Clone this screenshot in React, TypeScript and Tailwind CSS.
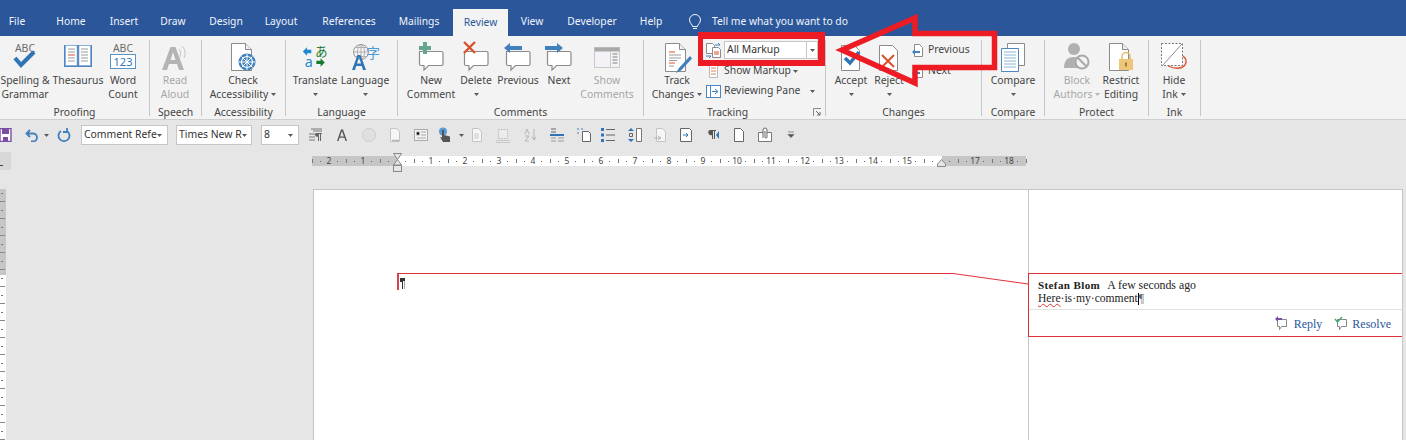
import React from "react";

const sans = "font-['Noto_Sans',sans-serif]";

function Caret({ c = "#5a5a5a" }: { c?: string }) {
  return (
    <svg width="5" height="3" viewBox="0 0 5 3" className="inline-block shrink-0">
      <path d="M0 0h5L2.500 3z" fill={c} />
    </svg>
  );
}

function Bubble({ children, muted }: { children?: React.ReactNode; muted?: boolean }) {
  return (
    <svg width="30" height="32" viewBox="0 0 30 32">
      <path d="M3.500 10.500h22a1.500 1.500 0 0 1 1.500 1.500v11a1.500 1.500 0 0 1-1.500 1.500H12.500l-4.500 4.500v-4.500H5a1.500 1.500 0 0 1-1.500-1.500z" fill="#fff" stroke={muted ? "#bbb" : "#8b8b8b"} strokeWidth="1.200" />
      {children}
    </svg>
  );
}

const icons: Record<string, React.ReactNode> = {
  spell: (
    <svg width="30" height="32" viewBox="0 0 30 32">
      <text x="15" y="11" textAnchor="middle" fontFamily="'Noto Sans',sans-serif" fontSize="10.5" fill="#6b6b6b">ABC</text>
      <path d="M5 17l6 7L24 11" fill="none" stroke="#2f74b5" strokeWidth="4.200" />
    </svg>
  ),
  thes: (
    <svg width="30" height="32" viewBox="0 2 30 32">
      <path d="M1 6h28v22H1z" fill="#4d86c0" />
      <path d="M2.500 6.500h11.500v20H2.500zM16 6.500h11.500v20H16z" fill="#fff" stroke="#7aa2cc" strokeWidth=".6" />
      <path d="M5 10h7M5 13h7M5 19h7M5 22h7" stroke="#9b9b9b" strokeWidth="1.100" />
      <path d="M5 16h7" stroke="#d9603d" strokeWidth="1.100" />
      <path d="M18 10h7M18 13h7M18 16h7M18 19h7M18 22h7" stroke="#9b9b9b" strokeWidth="1.100" />
    </svg>
  ),
  count: (
    <svg width="28" height="32" viewBox="0 0 28 32">
      <text x="14" y="11" textAnchor="middle" fontFamily="'Noto Sans',sans-serif" fontSize="10.5" fill="#6b6b6b">ABC</text>
      <rect x="1.500" y="13.500" width="25" height="14" fill="#fff" stroke="#5b93c9" />
      <text x="14" y="25" textAnchor="middle" fontFamily="'Noto Sans',sans-serif" fontSize="11" fill="#2f74b5">123</text>
    </svg>
  ),
  read: (
    <svg width="28" height="32" viewBox="0 0 28 32">
      <path d="M1 29L9.500 6h5L23 29h-5l-2-6H8l-2 6zM9.500 19h5L12 11z" fill="#b4b4b4" />
      <path d="M18 8q3 3 1 8M21 5q5 5 2 12" fill="none" stroke="#c4c4c4" />
    </svg>
  ),
  access: (
    <svg width="30" height="34" viewBox="0 0 30 34">
      <path d="M3.500 3.500h14l6 6v21h-20z" fill="#fff" stroke="#8b8b8b" />
      <path d="M17.500 3.500v6h6" fill="#eee" stroke="#8b8b8b" />
      <circle cx="19" cy="22" r="8.500" fill="#3f80bd" />
      <circle cx="19" cy="22" r="5.500" fill="none" stroke="#fff" strokeWidth="1.200" />
      <path d="M19 14v16M11 22h16M13.500 16.500l11 11M24.500 16.500l-11 11" stroke="#fff" strokeWidth="1" />
    </svg>
  ),
  translate: (
    <svg width="27" height="31" viewBox="0 -3 32 36">
      <path d="M11 7H6V4L1 9l5 5v-3h5z" fill="#1e88d2" />
      <text x="23" y="14" textAnchor="middle" fontFamily="'Noto Sans CJK JP',sans-serif" fontSize="15" fill="#197b30">あ</text>
      <text x="8" y="28" textAnchor="middle" fontFamily="'Noto Sans',sans-serif" fontSize="17" fill="#1e88d2">a</text>
      <path d="M17 20h5v-3l5 5-5 5v-3h-5z" fill="#197b30" />
    </svg>
  ),
  language: (
    <svg width="32" height="32" viewBox="0 0 32 32">
      <circle cx="12" cy="11" r="7.500" fill="none" stroke="#9b9b9b" />
      <path d="M4.500 11h15M12 3.500v15M6 6.500h12M6 15.500h12" stroke="#9b9b9b" strokeWidth=".7" />
      <ellipse cx="12" cy="11" rx="3.500" ry="7.500" fill="none" stroke="#9b9b9b" strokeWidth=".7" />
      <text x="24" y="17" textAnchor="middle" fontFamily="'Noto Sans CJK SC',sans-serif" fontSize="14" fill="#4b9bd5">字</text>
      <path d="M3 29l5.500-15h3L17 29h-3l-1.200-4H7.200L6 29zM8 22.500h4L10 16z" fill="#2f74b5" />
    </svg>
  ),
  newc: (
    <Bubble>
      <path d="M3 5h4V1h4v4h4v4h-4v4H7V9H3z" fill="#63a58f" />
    </Bubble>
  ),
  del: (
    <Bubble>
      <path d="M3 1l11 11M14 1L3 12" stroke="#d9512c" strokeWidth="2.400" />
    </Bubble>
  ),
  prev: (
    <Bubble>
      <path d="M1 7l6-5v3h12v4H7v3z" fill="#3f80bd" />
    </Bubble>
  ),
  next: (
    <Bubble>
      <path d="M19 7l-6-5v3H1v4h12v3z" fill="#3f80bd" />
    </Bubble>
  ),
  show: (
    <svg width="30" height="32" viewBox="0 0 30 32">
      <rect x="2.500" y="6.500" width="25" height="20" fill="#f5f2f7" stroke="#c9c9c9" />
      <path d="M2.500 6.500h25v4h-25z" fill="#a8a8a8" />
      <path d="M18.500 10v16" stroke="#c9c9c9" />
      <path d="M20.500 13h5M20.500 16h5M20.500 19h5M20.500 22h5" stroke="#a8a8a8" strokeWidth="1.400" />
    </svg>
  ),
  track: (
    <svg width="32" height="34" viewBox="0 0 32 34">
      <path d="M4.500 3.500h14l6 6v22h-20z" fill="#fff" stroke="#8b8b8b" />
      <path d="M18.500 3.500v6h6" fill="#eee" stroke="#8b8b8b" />
      <path d="M8 12h6M8 23h6" stroke="#d9512c" strokeWidth="1.200" />
      <path d="M8 15h12M8 18h12M8 20.500h8M8 26h5" stroke="#9b9b9b" strokeWidth="1.100" />
      <path d="M29 16l-11 12-3 5 5-2.500 11-12z" fill="#3f80bd" />
    </svg>
  ),
  accept: (
    <svg width="30" height="34" viewBox="0 0 30 34">
      <path d="M5.500 5.500h13l5 5v20h-18z" fill="#fff" stroke="#8b8b8b" />
      <path d="M9 18l5 5 9-11" fill="none" stroke="#2f74b5" strokeWidth="3.500" />
    </svg>
  ),
  reject: (
    <svg width="30" height="34" viewBox="0 0 30 34">
      <path d="M5.500 5.500h13l5 5v20h-18z" fill="#fff" stroke="#8b8b8b" />
      <path d="M8 15l12 12M20 15L8 27" stroke="#d9512c" strokeWidth="2" />
    </svg>
  ),
  compare: (
    <svg width="30" height="34" viewBox="0 0 30 34">
      <path d="M9.500 3.500h17v22h-17z" fill="#fff" stroke="#8b8b8b" />
      <path d="M3.500 8.500h17v23h-17z" fill="#fff" stroke="#4d86c0" />
      <path d="M6 12h12M6 15h12M6 18h12M6 21h12M6 24h12M6 27h12" stroke="#8cb4da" />
    </svg>
  ),
  block: (
    <svg width="32" height="34" viewBox="0 0 32 34">
      <circle cx="13" cy="9" r="6" fill="#b0b0b0" />
      <path d="M3 28q0-11 10-11t10 11z" fill="#b0b0b0" />
      <circle cx="21" cy="22" r="6.500" fill="#f3f3f3" stroke="#a8a8a8" strokeWidth="2" />
      <path d="M16.500 17.500l9 9" stroke="#a8a8a8" strokeWidth="2" />
    </svg>
  ),
  restrict: (
    <svg width="30" height="34" viewBox="0 0 30 34">
      <path d="M3.500 3.500h13l6 6v21h-19z" fill="#fff" stroke="#8b8b8b" />
      <path d="M16.500 3.500v6h6" fill="#eee" stroke="#8b8b8b" />
      <path d="M16 19v-2.500a4 4 0 0 1 8 0V19" fill="none" stroke="#e3bb6a" strokeWidth="1.500" />
      <rect x="13" y="19" width="14" height="11" fill="#edc67a" />
      <rect x="19" y="22.500" width="2" height="4" fill="#a07f3c" />
    </svg>
  ),
  ink: (
    <svg width="32" height="34" viewBox="0 0 32 34">
      <path d="M3.500 3.500h21v22h-21z" fill="#fff" stroke="#777" strokeDasharray="2 1.500" />
      <path d="M4 26L24 4" stroke="#8b8b8b" />
      <path d="M10 26q12 5 17-1 3-5-2-9" fill="none" stroke="#d9512c" strokeWidth="1.300" />
    </svg>
  ),
};

function Big({ w, icon, l1, l2, gray, caret, ml }: { w: string; icon: string; l1: string; l2?: string; gray?: boolean; caret?: "own" | "inline"; ml?: string }) {
  return (
    <div className={`${w} ${ml ?? ""} flex flex-col items-center shrink-0 ${gray ? "text-[#a6a6a6]" : "text-[#444]"}`}>
      <div className="h-[33px] w-full flex justify-center items-center">{icons[icon]}</div>
      <div className="leading-[14px] whitespace-nowrap">{l1}</div>
      {l2 && (
        <div className="leading-[14px] whitespace-nowrap flex items-center gap-[3px]">
          {l2}
          {caret === "inline" && <Caret c={gray ? "#b5b5b5" : "#5a5a5a"} />}
        </div>
      )}
      {caret === "own" && <div className="h-[14px] flex items-center"><Caret /></div>}
    </div>
  );
}

function Group({ w, label, children, labelPr }: { w: string; label: string; children: React.ReactNode; labelPr?: string }) {
  return (
    <div className={`${w} h-[76px] shrink-0 border-r border-[#c6c6c6] relative`}>
      <div className="h-[65px] flex">{children}</div>
      <div className={`leading-[14px] text-center text-[#444] ${labelPr ?? ""}`}>{label}</div>
    </div>
  );
}

function Launcher() {
  return (
    <svg width="9" height="9" viewBox="0 0 9 9" className="absolute right-[3px] bottom-[-1px]">
      <path d="M.5 8V.5H8" fill="none" stroke="#8a8a8a" />
      <path d="M3 3l4 4M7 4v3H4" fill="none" stroke="#666" />
    </svg>
  );
}

function Tab({ w, label, active, pl }: { w: string; label: string; active?: boolean; pl?: string }) {
  return (
    <div className={`${w} ${pl ?? ""} shrink-0 flex items-center justify-center whitespace-nowrap ${active ? "h-[27px] bg-[#f3f3f3] text-[#2b579a]" : "h-[28px] text-[#f0f4fa]"}`}>
      {label}
    </div>
  );
}

function Combo({ w, label, ml }: { w: string; label: string; ml: string }) {
  return (
    <div className={`${w} ${ml} h-[20px] shrink-0 bg-white border border-[#c6c6c6] flex items-center justify-between pl-[2px] pr-[5px] text-[#333]`}>
      <span className="whitespace-nowrap">{label}</span>
      <Caret />
    </div>
  );
}

function Tool({ ml, children }: { ml: string; children?: React.ReactNode }) {
  return (
    <svg width="16" height="16" viewBox="0 0 16 16" className={`${ml} shrink-0`}>
      {children}
    </svg>
  );
}

const doc = <path d="M3.500 1.500h6l3 3v10h-9z" fill="#f6f6f6" stroke="#c4c4c4" />;

function Ruler() {
  const slots = [];
  for (let i = -10; i <= 74; i++) {
    let c: React.ReactNode;
    if (i === 0 || i === 64) c = null;
    else if (i % 4 === 0) c = <span className="text-[8.5px] leading-[10px] text-[#444]">{Math.abs(i / 4)}</span>;
    else if (i % 4 === 2 || i % 4 === -2) c = <span className="w-px h-[4px] bg-[#777]" />;
    else c = <span className="w-px h-px bg-[#666]" />;
    slots.push(
      <div key={i} className="w-[8.5px] h-[10px] shrink-0 flex items-center justify-center">{c}</div>
    );
  }
  return (
    <div className="ml-[312px] w-[714px] h-[10px] relative bg-[linear-gradient(to_right,#c6c6c6_85px,#ffffff_85px,#ffffff_630px,#c6c6c6_630px)]">
      <div className="flex -ml-[4.25px] w-[722px]">{slots}</div>
      <svg width="10" height="20" viewBox="0 0 10 20" className="absolute left-[81px] -top-[3px]">
        <path d="M.5.500h8L4.500 6.500zM4.500 6.500L.500 12h8z" fill="#e6e6e6" stroke="#888" />
        <rect x=".5" y="12.500" width="8" height="6" fill="#e6e6e6" stroke="#888" />
      </svg>
      <svg width="10" height="10" viewBox="0 0 10 10" className="absolute left-[625px] top-[2px]">
        <path d="M.5 8.500V6L4.500 1.500l4 4.500v2.500z" fill="#e6e6e6" stroke="#888" />
      </svg>
    </div>
  );
}

function VRuler() {
  const marks = [];
  for (let i = 0; i < 30; i++) {
    marks.push(
      <div key={i} className="h-[8.5px] shrink-0 flex items-center">
        <span className={i % 2 === 0 ? "w-[2px] h-px bg-[#777]" : "w-[5px] h-px bg-[#888] -ml-[1px]"} />
      </div>
    );
  }
  return <div className="relative flex flex-col pl-[1px]">{marks}</div>;
}

export default function App() {
  return (
    <div className={`${sans} w-[1406px] h-[440px] overflow-hidden relative bg-[#e6e6e6] text-[10.4px]`}>
      {/* Title + tabs */}
      <div className="h-[36px] bg-[#2b579a] flex items-end text-[10.3px]">
        <Tab w="w-[34px]" label="File" />
        <Tab w="w-[74px]" label="Home" />
        <Tab w="w-[32px]" label="Insert" />
        <Tab w="w-[66px]" label="Draw" />
        <Tab w="w-[40px]" label="Design" />
        <Tab w="w-[70px]" label="Layout" />
        <Tab w="w-[64px]" pl="pl-[2px]" label="References" />
        <Tab w="w-[73px]" pl="pl-[5px]" label="Mailings" />
        <Tab w="w-[55px]" label="Review" active />
        <Tab w="w-[48px]" label="View" />
        <Tab w="w-[72px]" label="Developer" />
        <Tab w="w-[46px]" label="Help" />
        <div className="h-[28px] flex items-center ml-[14px] w-[24px] shrink-0">
          <svg width="14" height="17" viewBox="0 0 14 17" fill="none" stroke="#f0f4fa">
            <path d="M4.500 12.500c0-2-3-3.500-3-6.500a5.500 5.500 0 0 1 11 0c0 3-3 4.500-3 6.500zM5 14.500h4" />
          </svg>
        </div>
        <div className="h-[28px] flex items-center text-[#f0f4fa] whitespace-nowrap">Tell me what you want to do</div>
      </div>

      {/* Ribbon */}
      <div className="h-[84px] bg-[#f3f3f3] border-b border-[#cfcfcf] pt-[4px] flex">
        <Group w="w-[150px]" label="Proofing">
          <Big w="w-[50px]" icon="spell" l1="Spelling &" l2="Grammar" />
          <Big w="w-[56px]" icon="thes" l1="Thesaurus" />
          <Big w="w-[34px]" icon="count" l1="Word" l2="Count" />
        </Group>
        <Group w="w-[52px]" label="Speech">
          <Big w="w-[50px]" icon="read" l1="Read" l2="Aloud" gray />
        </Group>
        <Group w="w-[84px]" label="Accessibility">
          <Big w="w-[82px]" icon="access" l1="Check" l2="Accessibility" caret="inline" />
        </Group>
        <Group w="w-[112px]" label="Language">
          <Big ml="ml-[3px]" w="w-[52px]" icon="translate" l1="Translate" caret="own" />
          <Big w="w-[48px]" icon="language" l1="Language" caret="own" />
        </Group>
        <Group w="w-[246px]" label="Comments">
          <Big ml="ml-[10px]" w="w-[46px]" icon="newc" l1="New" l2="Comment" />
          <Big w="w-[44px]" icon="del" l1="Delete" caret="own" />
          <Big w="w-[40px]" icon="prev" l1="Previous" />
          <Big w="w-[42px]" icon="next" l1="Next" />
          <Big w="w-[54px]" icon="show" l1="Show" l2="Comments" gray />
        </Group>
        <Group w="w-[182px]" label="Tracking" labelPr="pr-[14px]">
          <Big ml="ml-[9px]" w="w-[48px]" icon="track" l1="Track" l2="Changes" caret="inline" />
          <div className="flex flex-col ml-[4px] text-[#444]">
            <div className="h-[20px] flex items-center gap-[2px]">
              <svg width="17" height="17" viewBox="0 0 17 17" className="shrink-0">
                <path d="M1.500 1.500h6l2 2v8h-8z" fill="#fff" stroke="#8b8b8b" />
                <path d="M7.500 5.500h6l2 2v8h-8z" fill="#fff" stroke="#8b8b8b" />
                <path d="M9 10h5M9 12h5" stroke="#d9512c" />
                <path d="M10 3h5l-2-2" fill="none" stroke="#3f80bd" />
                <path d="M1 14h5l-2 2" fill="none" stroke="#3f80bd" />
              </svg>
              <div className="w-[94px] h-[18px] bg-white border border-[#c6c6c6] flex items-center pl-[2px] text-[#333]">
                <span className="flex-1 whitespace-nowrap">All Markup</span>
                <span className="w-[11px] h-full border-l border-[#c6c6c6] flex items-center justify-center"><Caret /></span>
              </div>
            </div>
            <div className="h-[20px] mt-[1px] flex items-center gap-[2px]">
              <svg width="17" height="15" viewBox="0 0 17 15" className="shrink-0">
                <path d="M4.500 1.500h8v12h-8z" fill="#fff" stroke="#bbb" />
                <path d="M6 4h5M6 7h5M6 10h5" stroke="#d9825c" />
              </svg>
              <span className="whitespace-nowrap">Show Markup</span>
              <Caret />
            </div>
            <div className="h-[20px] flex items-center gap-[2px]">
              <svg width="17" height="15" viewBox="0 0 17 15" className="shrink-0">
                <rect x="1.500" y="1.500" width="14" height="12" fill="#fff" stroke="#4d86c0" />
                <path d="M5.500 1.500v12" stroke="#4d86c0" />
                <path d="M7 7.500h5M10 5l3 2.500-3 2.500" fill="none" stroke="#3f80bd" />
              </svg>
              <span className="whitespace-nowrap">Reviewing Pane</span>
              <span className="ml-[8px] flex"><Caret /></span>
            </div>
          </div>
          <Launcher />
        </Group>
        <Group w="w-[156px]" label="Changes">
          <Big ml="ml-[3px]" w="w-[44px]" icon="accept" l1="Accept" caret="own" />
          <Big w="w-[32px]" icon="reject" l1="Reject" caret="own" />
          <div className="flex flex-col ml-[6px] text-[#444]">
            <div className="h-[20px] flex items-center gap-[4px]">
              <svg width="13" height="15" viewBox="0 0 13 15" className="shrink-0">
                <path d="M3.500 1.500h5l3 3v9h-8z" fill="#fff" stroke="#8b8b8b" />
                <path d="M1 9l3-3v2h5v2H4v2z" fill="#3f80bd" />
              </svg>
              <span>Previous</span>
            </div>
            <div className="h-[20px] mt-[1px] flex items-center gap-[4px]">
              <svg width="13" height="15" viewBox="0 0 13 15" className="shrink-0">
                <path d="M3.500 1.500h5l3 3v9h-8z" fill="#fff" stroke="#8b8b8b" />
                <path d="M1 9l3-3v2h5v2H4v2z" fill="#3f80bd" />
              </svg>
              <span>Next</span>
            </div>
          </div>
        </Group>
        <Group w="w-[63px]" label="Compare">
          <Big w="w-[62px]" icon="compare" l1="Compare" caret="own" />
        </Group>
        <Group w="w-[104px]" label="Protect">
          <Big ml="ml-[10px]" w="w-[44px]" icon="block" l1="Block" l2="Authors" caret="inline" gray />
          <Big w="w-[44px]" icon="restrict" l1="Restrict" l2="Editing" />
        </Group>
        <Group w="w-[52px]" label="Ink">
          <Big w="w-[50px]" icon="ink" l1="Hide" l2="Ink" caret="inline" />
        </Group>
      </div>

      {/* Quick access */}
      <div className="h-[30px] flex items-center">
        <svg width="12" height="14" viewBox="0 0 12 14" className="shrink-0">
          <path d="M0 .5h11v13H0z" fill="#fff" stroke="#7a4fa3" strokeWidth="1.400" />
          <path d="M2 1h7v5H2zM3 9h5v5H3z" fill="#7a4fa3" />
        </svg>
        <svg width="14" height="14" viewBox="0 0 14 14" className="ml-[13px] shrink-0" fill="none" stroke="#3f80bd" strokeWidth="1.800">
          <path d="M5 2L1.500 5.500 5 9M2 5.500h6a4 4 0 0 1 0 8H6" />
        </svg>
        <span className="ml-[5px] flex"><Caret /></span>
        <svg width="14" height="14" viewBox="0 0 14 14" className="ml-[8px] shrink-0" fill="none" stroke="#3f80bd" strokeWidth="1.800">
          <path d="M4 3a5.500 5.500 0 1 0 6 0M10 0v4H6" />
        </svg>
        <Combo ml="ml-[10px]" w="w-[87px]" label="Comment Refe" />
        <Combo ml="ml-[8px]" w="w-[76px]" label="Times New R" />
        <Combo ml="ml-[9px]" w="w-[38px]" label="8" />
        <Tool ml="ml-[9px]"><path d="M3 2h11M5 4h9M1 7h6M1 10h6M1 13h6" stroke="#777" /><path d="M8 6h6v1h-1v7h-1V7h-1v7h-1V9.500A2 2 0 0 1 8 6z" fill="#666" /></Tool>
        <Tool ml="ml-[10px]"><path d="M3 14L7 2.500h2L13 14h-1.500l-1.100-3.200H5.600L4.500 14zM6.100 9.500h3.800L8 4z" fill="#555" /></Tool>
        <Tool ml="ml-[11px]"><circle cx="8" cy="8" r="6.500" fill="#e0e0e0" stroke="#cdcdcd" /></Tool>
        <Tool ml="ml-[10px]">{doc}<path d="M5 13.500h7" stroke="#b5b5b5" strokeWidth="1.500" /></Tool>
        <Tool ml="ml-[10px]"><rect x="1.500" y="2.500" width="13" height="11" fill="#f2f2f2" stroke="#aaa" /><path d="M3.500 5h3v3h-3zM8 5h5M8 8h5M4 11h9" stroke="#aaa" /></Tool>
        <Tool ml="ml-[8px]"><circle cx="6" cy="4.500" r="4" fill="#5b9bd5" /><path d="M5 3h2v5l6 1.500V15H6L3 10l2 .5z" fill="#555" /></Tool>
        <span className="ml-[5.5px] flex"><Caret /></span>
        <Tool ml="ml-[5px]">{doc}<path d="M5 7h5M5 9h5M5 11h5" stroke="#ccc" /></Tool>
        <Tool ml="ml-[10px]"><path d="M3.500 2.500h9v9h-9z" fill="#ececec" stroke="#bbb" strokeDasharray="1.500 1" /><path d="M1 13.500h14M1 15.500h14" stroke="#c9c9c9" /></Tool>
        <Tool ml="ml-[11px]"><path d="M3 7l2-5 2 5M3 9h4l-4 5h4" fill="none" stroke="#b5b5b5" /><path d="M12 2v11M10 10l2 3 2-3" fill="none" stroke="#b5b5b5" /></Tool>
        <Tool ml="ml-[11px]"><path d="M2 2h5M2 5h5" stroke="#666" /><path d="M1 8h14" stroke="#2f74b5" strokeWidth="2" /><path d="M2 11h5M2 14h5M9 11h6M9 14h6" stroke="#999" /></Tool>
        <Tool ml="ml-[11px]"><path d="M6.500 4.500h6l2 2v8h-8z" fill="#fff" stroke="#666" /><path d="M1 2h2M5 2h2M1 6h2" stroke="#3f80bd" /></Tool>
        <Tool ml="ml-[8px]"><path d="M1 1h3v3H1zM1 6.500h3v3H1zM1 12h3v3H1z" fill="#2f74b5" /><path d="M6 2.500h9M6 8h9M6 13.500h9" stroke="#666" /></Tool>
        <Tool ml="ml-[11px]"><path d="M4 1l3 3H1zM4 15l3-3H1z" fill="#2f74b5" /><path d="M2.500 6.500h3v3h-3z" fill="none" stroke="#666" /><path d="M9.500 1.500h5v13h-5z" fill="#fff" stroke="#777" /></Tool>
        <Tool ml="ml-[10px]">{doc}<path d="M1 11h7M5 9l3 2-3 2" fill="none" stroke="#b5b5b5" /></Tool>
        <Tool ml="ml-[9px]"><path d="M2.500 1.500h9l2 2v11h-11z" fill="#fff" stroke="#666" /><path d="M5 8h5M8 6l2 2-2 2" fill="none" stroke="#2f74b5" /></Tool>
        <Tool ml="ml-[10px]"><path d="M6 3h6v1h-1v8h-1V4H9v8H8V8a2.500 2.500 0 0 1-2-5z" fill="#555" /><path d="M15 4v8l-3-4z" fill="#2f74b5" /></Tool>
        <Tool ml="ml-[11px]"><path d="M3.500 1.500h6l3 3v10h-9z" fill="#fff" stroke="#666" /></Tool>
        <Tool ml="ml-[10px]"><path d="M1.500 5.500h13v9h-13z" fill="#fff" stroke="#777" /><path d="M6 11V3a2 2 0 0 1 4 0v7a1 1 0 0 1-2 0V4" fill="#fff" stroke="#666" /></Tool>
        <svg width="8" height="8" viewBox="0 0 8 8" className="ml-[14px] shrink-0"><path d="M1 1h6M1 3.500h6l-3 3z" fill="#555" stroke="#555" strokeWidth=".6" /></svg>
      </div>

      {/* Ruler row */}
      <div className="h-[10px] mt-[6px]"><Ruler /></div>
      <div className="absolute left-0 top-[152px] w-[11px] h-[18px] bg-[#d8d8d8] flex items-end"><span className="w-[3px] h-[1px] bg-[#444] mb-[4px]" /></div>

      {/* Document area */}
      <div className="flex mt-[23px] h-[251px]">
        <div className="w-[6px] shrink-0 relative overflow-hidden bg-[linear-gradient(to_bottom,#c6c6c6_86px,#ffffff_86px)]">
          <VRuler />
        </div>
        <div className="ml-[307px] w-[1090px] bg-white border-l border-t border-r border-[#c6c6c6] flex">
          <div className="w-[715px] shrink-0 border-r border-[#c6c6c6] pt-[84px] pl-[83px]">
            <div className="flex items-start">
              <span className="w-[2px] h-[16px] bg-[#d9434c]" />
              <svg width="6" height="13" viewBox="0 0 6 13" className="ml-px mt-[3px]">
                <path d="M0 1h5v3H3v8H2V5H0z" fill="#333" />
                <path d="M4 4h1v8H4z" fill="#aaa" />
              </svg>
            </div>
          </div>
          <div className="flex-1 pt-[83px] -ml-px">
            <div className="h-[64px] border-t border-b border-l border-[#e0303a] font-['Liberation_Serif',serif] text-[11px]">
              <div className="h-[36px] pl-[9px] pt-[4px] border-b border-[#e2e2e2] leading-[14px] text-[#222]">
                <div className="whitespace-nowrap"><b className="tracking-[0.4px]">Stefan Blom</b><span className="ml-[7px] text-[11.8px]">A few seconds ago</span></div>
                <div className="whitespace-nowrap flex items-center text-[11.6px]"><span className="underline decoration-wavy decoration-[#d33] decoration-1">Here</span>·is·my·comment<span className="w-px h-[12px] bg-black" /><span className="text-[#666]">¶</span></div>
              </div>
              <div className="h-[27px] flex items-center justify-end pr-[11px] text-[#2b579a] text-[12px]">
                <svg width="15" height="15" viewBox="0 0 15 15" className="shrink-0 -ml-[2px]">
                  <path d="M3.500 3.500h9v7h-5l-2 3v-3h-2z" fill="#fff" stroke="#888" />
                  <path d="M1 3l3-3v2h4v2H4v2z" fill="#7a4fa3" />
                </svg>
                <span className="ml-[5px]">Reply</span>
                <svg width="15" height="15" viewBox="0 0 15 15" className="shrink-0 ml-[12px]">
                  <path d="M3.500 3.500h9v7h-5l-2 3v-3h-2z" fill="#fff" stroke="#888" />
                  <path d="M1 3l2.500 3L8 1" fill="none" stroke="#3aa76d" strokeWidth="1.300" />
                </svg>
                <span className="ml-[3px]">Resolve</span>
              </div>
            </div>
          </div>
        </div>
      </div>

      {/* Anchor line */}
      <svg width="1406" height="440" className="absolute inset-0 pointer-events-none">
        <path d="M397 273.500H953L1028 284" fill="none" stroke="#e0303a" />
      </svg>
      {/* Red annotations */}
      <div className="absolute left-[698px] top-[32px] w-[127px] h-[34px] border-l-[5px] border-t-[7px] border-r-[7px] border-b-[6px] border-[#ed1c24] pointer-events-none" />
      <svg width="1406" height="440" className="absolute inset-0 pointer-events-none">
        <path d="M842 50L915 18V33.500H994.500V67.500H915V83z" fill="none" stroke="#ed1c24" strokeWidth="5.500" />
      </svg>
    </div>
  );
}
